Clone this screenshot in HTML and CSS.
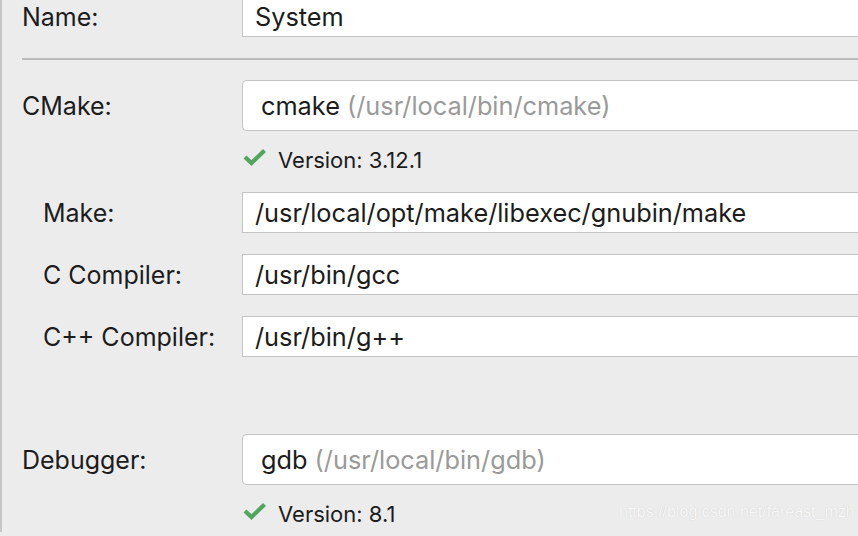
FILE: index.html
```html
<!DOCTYPE html>
<html>
<head>
<meta charset="utf-8">
<link rel="stylesheet" href="styles.css">
</head>
<body>
<div class="panel">
  <div class="row row-name">
    <div class="label">Name:</div>
    <div class="field">System</div>
  </div>
  <div class="separator"></div>
  <div class="row row-combo">
    <div class="label">CMake:</div>
    <div class="combo">cmake <span class="hint">(/usr/local/bin/cmake)</span></div>
  </div>
  <div class="status">
    <svg class="check" width="24" height="18" viewBox="0 0 24 18"><polyline points="2,9 8.5,15 21.5,2.5" fill="none" stroke="#52a55f" stroke-width="4.2" stroke-linejoin="miter" stroke-linecap="butt"/></svg>
    <span class="status-text">Version: 3.12.1</span>
  </div>
  <div class="row row-sub">
    <div class="label sub">Make:</div>
    <div class="field">/usr/local/opt/make/libexec/gnubin/make</div>
  </div>
  <div class="row row-sub">
    <div class="label sub">C Compiler:</div>
    <div class="field">/usr/bin/gcc</div>
  </div>
  <div class="row row-sub">
    <div class="label sub">C++ Compiler:</div>
    <div class="field">/usr/bin/g++</div>
  </div>
  <div class="row row-combo row-debugger">
    <div class="label">Debugger:</div>
    <div class="combo">gdb <span class="hint">(/usr/local/bin/gdb)</span></div>
  </div>
  <div class="status">
    <svg class="check" width="24" height="18" viewBox="0 0 24 18"><polyline points="2,9 8.5,15 21.5,2.5" fill="none" stroke="#52a55f" stroke-width="4.2" stroke-linejoin="miter" stroke-linecap="butt"/></svg>
    <span class="status-text">Version: 8.1</span>
  </div>
  <div class="watermark">https://blog.csdn.net/fareast_mzh</div>
</div>
</body>
</html>
```
FILE: styles.css
```css
html, body {
  margin: 0;
  padding: 0;
  background: #ececec;
  overflow: hidden;
}
body {
  width: 858px;
  height: 536px;
  font-family: Inter, "Liberation Sans", sans-serif;
  color: #1c1c1c;
}
.panel {
  position: relative;
  height: 536px;
  border-left: 2px solid #c6c6c6;
  padding-left: 20px;
  box-sizing: border-box;
}
.row {
  display: grid;
  grid-template-columns: 220px 1fr;
  align-items: center;
  margin-right: -20px;
}
.label {
  font-size: 25px;
  white-space: nowrap;
}
.label.sub {
  padding-left: 21px;
}
.field {
  height: 41px;
  box-sizing: border-box;
  background: #fff;
  border: 1px solid #c4c4c4;
  border-right: none;
  padding-left: 12px;
  font-size: 25.3px;
  line-height: 39px;
  white-space: nowrap;
}
.combo {
  height: 51px;
  box-sizing: border-box;
  background: #fff;
  border: 1px solid #c4c4c4;
  border-right: none;
  border-radius: 5px 0 0 5px;
  padding-left: 18px;
  font-size: 25.3px;
  line-height: 49px;
  white-space: nowrap;
}
.hint {
  color: #9a9a9a;
}
.row-name {
  margin-top: -4px;
}
.separator {
  height: 2px;
  background: #bcbcbc;
  margin-top: 21px;
  margin-right: -10px;
}
.row-combo {
  margin-top: 20px;
}
.status {
  display: flex;
  align-items: center;
  margin-left: 221px;
  margin-top: 15px;
  height: 22px;
  gap: 11px;
}
.status-text {
  font-size: 22px;
  padding-top: 5px;
}
.check {
  display: block;
}
.row-sub {
  margin-top: 21px;
}
.status + .row-sub {
  margin-top: 24px;
}
.row-debugger {
  margin-top: 77px;
}
.watermark {
  position: absolute;
  left: 617px;
  top: 507px;
  font-family: "Liberation Sans", sans-serif;
  font-size: 16px;
  color: #f7f7f7;
  text-shadow: 0 0 1px #c8c8c8;
}
```
